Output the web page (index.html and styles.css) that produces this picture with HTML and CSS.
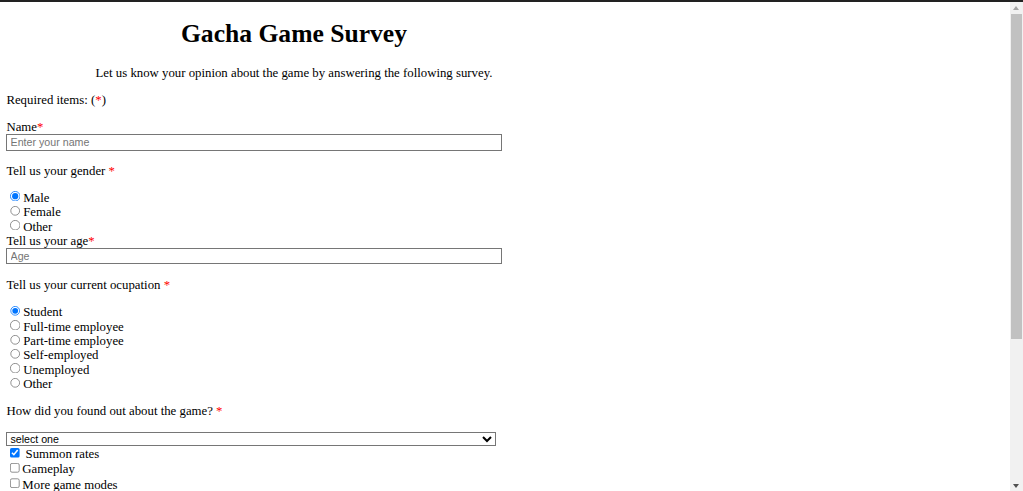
FILE: index.html
```html
<!DOCTYPE html>
<html>
    <head>
        <title>Gacha Game Survey</title>
        <link rel="stylesheet" href="styles.css">
    </head>
    <body>
        <div class='header'>
            <h1 id='title'>Gacha Game Survey</h1>
            <p id='description'>Let us know your opinion about the game by answering the following survey.</p>
        </div>
        <form id='survey-form'>
            <p>Required items: (<span class='req'>*</span>)</p>
            <label for='name' id='name-label'>Name<span class='req'>*</span></label><br>
            <input type='text' id='name' class='field' placeholder='Enter your name' required>

            <p>Tell us your gender <span class='req'>*</span></p>
            <input type='radio' name='gender' value='male' checked>Male<br>
            <input type='radio' name='gender' value='female'>Female<br>
            <input type='radio' name='gender' value='other'>Other<br>

            <label for='age' id='age-label'>Tell us your age<span class='req'>*</span></label><br>
            <input type='number' id='age' class='field' placeholder='Age' required>

            <p class='jobs'>Tell us your current ocupation <span class='req'>*</span></p>
            <input type='radio' name='job' value='student' checked>Student<br>
            <input type='radio' name='job' value='fulltime'>Full-time employee<br>
            <input type='radio' name='job' value='parttime'>Part-time employee<br>
            <input type='radio' name='job' value='self'>Self-employed<br>
            <input type='radio' name='job' value='unemployed'>Unemployed<br>
            <input type='radio' name='job' value='other'>Other<br>

            <p>How did you found out about the game? <span class='req'>*</span></p>
            <select id='dropdown' class='pick'>
                <option value=''>select one</option>
                <option value='friends'>Friends</option>
                <option value='ads'>Ads</option>
                <option value='store'>App store</option>
                <option value='social'>Social media</option>
            </select><br>
            <input type='checkbox' value='summon' checked> Summon rates<br>
            <input type='checkbox' value='gameplay'>Gameplay<br>
            <input type='checkbox' value='modes'>More game modes<br>
            <input type='checkbox' value='story'>Story<br>
            <input type='checkbox' value='art'>Art style<br>
            <input type='checkbox' value='music'>Music<br>

            <p>Any comments or suggestions?</p>
            <textarea id='comments' class='pick' rows='5' placeholder='Enter your comments here...'></textarea><br>
            <button type='submit' id='submit'>Submit</button>
        </form>

        <!-- fake scrollbar, page is taller than the window -->
        <div class='scrollbar'>
            <span class='arrow up'></span>
            <span class='thumb'></span>
            <span class='arrow down'></span>
        </div>
    </body>
</html>
```

FILE: styles.css
```css
html
{
    border-top: 2px solid #222;
    overflow-x: hidden;
}

body
{
    zoom: 0.8;
    font-family: "Liberation Serif", "Times New Roman", serif;
    font-size: 16px;
    line-height: 18px;
    color: black;
    background-color: white;
}

.header
{
    width: 719px;
    text-align: center;
}

#title
{
    margin-top: 13px;
    line-height: normal;
}

.req
{
    color: red;
}

.field
{
    width: 620px;
    height: 21px;
    margin-top: -1px;
    padding-left: 4px;
    box-sizing: border-box;
}

.jobs
{
    margin-top: 17px;
}

.pick
{
    width: 612px;
}

input[type=radio]
{
    margin: 0px 3px 0px 5px;
}

input[type=checkbox]
{
    margin: 2px 3px 0px 4px;
}

#submit
{
    margin-top: 10px;
    margin-bottom: 40px;
}

.scrollbar
{
    position: fixed;
    top: 2px;
    right: 0px;
    bottom: 0px;
    width: 13px;
    background-color: #f1f1f1;
    zoom: 1.25;
}

.thumb
{
    position: absolute;
    top: 12px;
    left: 1px;
    width: 11px;
    height: 325px;
    background-color: #c1c1c1;
}

.arrow
{
    position: absolute;
    left: 3px;
    width: 0px;
    height: 0px;
    border-left: 3.5px solid transparent;
    border-right: 3.5px solid transparent;
}

.up
{
    top: 4px;
    border-bottom: 4px solid #a3a3a3;
}

.down
{
    bottom: 3px;
    border-top: 4px solid #505050;
}
```
